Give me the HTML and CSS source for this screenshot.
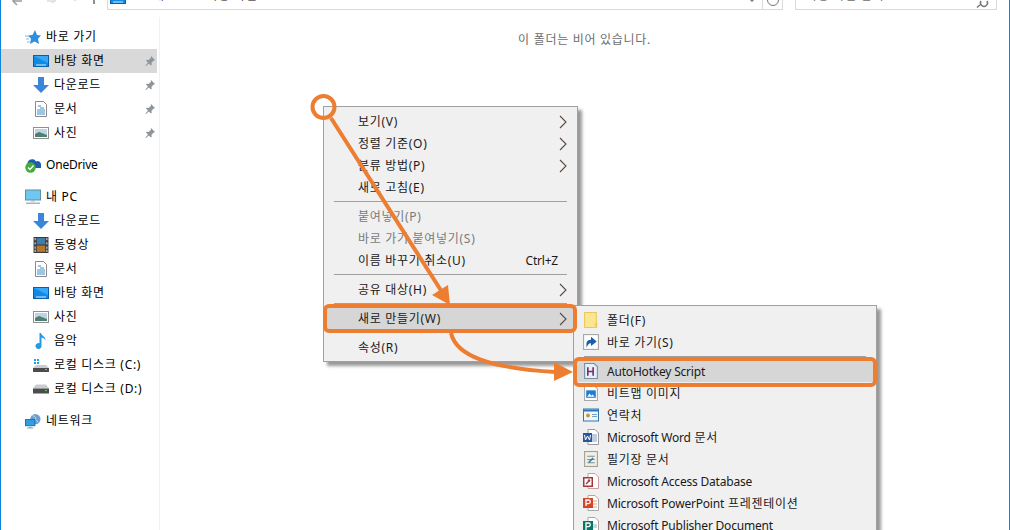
FILE: index.html
```html
<!DOCTYPE html>
<html lang="ko">
<head>
<meta charset="utf-8">
<title>바탕 화면</title>
<link rel="stylesheet" href="styles.css">
</head>
<body>
<svg class="defs" width="0" height="0">
  <defs>
    <symbol id="i-chev" viewBox="0 0 8 14"><path d="M1 1l6 6-6 6" fill="none" stroke="#5b4a42" stroke-width="1.100"/></symbol>
    <symbol id="i-desktop" viewBox="0 0 16 12"><rect x=".5" y=".5" width="15" height="11" fill="#0f8ae6" stroke="#0a5fa8"/><path d="M1 1h14v7z" fill="#35a9f5"/><path d="M3 10h10" stroke="#d5ecfb"/></symbol>
    <symbol id="i-down" viewBox="0 0 16 16"><path d="M5 0h6v8h5l-8 8-8-8h5z" fill="#3a86d8"/></symbol>
    <symbol id="i-doc" viewBox="0 0 12 16"><path d="M.5.5h8l3 3v12H.5z" fill="#fff" stroke="#8a8a8a"/><path d="M3 5h3M5 7h4M2 9h8M2 11h8M2 13h8" stroke="#3b8ec9"/></symbol>
    <symbol id="i-pic" viewBox="0 0 16 12"><rect x=".5" y=".5" width="15" height="11" fill="#fff" stroke="#8f8f8f"/><rect x="2" y="2" width="12" height="8" fill="#bcd3e6"/><path d="M2 7l4-2 8 3v2H2z" fill="#4f7f6d"/></symbol>
    <symbol id="i-star" viewBox="0 0 16 16"><path d="M10 1l2 5 4 .5-3 3.2 1 5.3-4.500-2.500L5 15l1-5.300-3-3.200 4.500-.500z" fill="#2f8fdf"/><path d="M0 7h4M1 10h3M2 13h3" stroke="#7fbdf0"/></symbol>
    <symbol id="i-pin" viewBox="0 0 10 11"><path d="M6 0l4 4-1.500.8-2 2 .2 2-.8.700-2-2L1 10l-.5-.5 2.500-3-2-2 .7-.8 2 .2 2-2z" fill="#8d959b"/></symbol>
    <symbol id="i-cloud" viewBox="0 0 16 16"><path d="M3 9a4.500 4.500 0 0 1 8-4.500A3.500 3.500 0 0 1 16 8v3H3z" fill="#1b5fb0"/><circle cx="5.500" cy="10.500" r="5.200" fill="#46ab3b"/><path d="M3 10.500l2 2 3.500-4" stroke="#fff" stroke-width="1.500" fill="none"/></symbol>
    <symbol id="i-pc" viewBox="0 0 16 15"><rect x=".5" y=".5" width="15" height="10" fill="#6fc6ee" stroke="#5e8ea6"/><path d="M6 11h4v1H6zM1 13h14v1.500H1z" fill="#a8b4bb"/></symbol>
    <symbol id="i-film" viewBox="0 0 14 15"><rect width="14" height="15" fill="#3a3a3a"/><rect x="3" y="1" width="8" height="6" fill="#3d7fa8"/><rect x="3" y="8" width="8" height="6" fill="#b5772b"/><path d="M1 1h1v2H1zM1 5h1v2H1zM1 9h1v2H1zM1 12h1v2H1zM12 1h1v2h-1zM12 5h1v2h-1zM12 9h1v2h-1zM12 12h1v2h-1z" fill="#ddd"/></symbol>
    <symbol id="i-music" viewBox="0 0 11 16"><path d="M4 0h1.500c.5 3 5 3.500 4.500 7.500C9.500 5.500 7.500 5 6 4.500V13a3 3 0 1 1-2-2.800z" fill="#1f9be8"/></symbol>
    <symbol id="i-driveC" viewBox="0 0 16 14"><path d="M1 1h2v2H1zM4 1h2v2H4zM1 4h2v2H1zM4 4h2v2H4z" fill="#1aa3e8"/><path d="M3 7h10l3 3H0z" fill="#c9cdd0"/><rect y="10" width="16" height="4" fill="#4c4c4c"/><rect x="12" y="11" width="2" height="1" fill="#58d25a"/></symbol>
    <symbol id="i-driveD" viewBox="0 0 16 9"><path d="M3 0h10l3 4H0z" fill="#c9cdd0"/><rect y="4" width="16" height="5" fill="#4c4c4c"/><rect x="12" y="5.500" width="2" height="1" fill="#58d25a"/></symbol>
    <symbol id="i-net" viewBox="0 0 17 16"><circle cx="11" cy="6" r="5.500" fill="#6b9fd0"/><path d="M8 2c3 1 4 3 3 5l3 2" stroke="#c7dff2" fill="none"/><rect x=".5" y="6.500" width="10" height="6.500" fill="#2f9fe3" stroke="#1f6aa8"/><path d="M4 14h3v1H4zM2 15h7v1H2z" fill="#9aa6ad"/></symbol>
    <symbol id="i-folder" viewBox="0 0 13 15"><rect x=".5" y=".5" width="11" height="14" fill="#fde68f" stroke="#e8c860"/><path d="M10 10h2.500v4.500H10z" fill="#f6cf5a"/></symbol>
    <symbol id="i-short" viewBox="0 0 14 14"><rect x=".5" y=".5" width="13" height="13" fill="#fff" stroke="#a8a8a8"/><path d="M3 12V8.500C3 6 4.500 5 7 5V2.500l5 4-5 4V8c-2 0-3 1.500-4 4z" fill="#1d5ea8"/></symbol>
    <symbol id="i-ahk" viewBox="0 0 13 15"><path d="M.5.500h9l3 3v11H.5z" fill="#e4effa" stroke="#7b8ba5"/><path d="M3.500 4v8M8.500 4v8M3.500 8h5" stroke="#7d2a5e" stroke-width="1.500" fill="none"/></symbol>
    <symbol id="i-bmp" viewBox="0 0 13 15"><path d="M.5.500h9l3 3v11H.5z" fill="#fff" stroke="#a8a8a8"/><rect x="2" y="5" width="9" height="7" fill="#1b7fd6"/><path d="M3 11l2-3 2 2 1-1 2 2z" fill="#fff"/></symbol>
    <symbol id="i-contact" viewBox="0 0 16 13"><rect x=".5" y=".5" width="15" height="12" fill="#eef5fb" stroke="#2c78b4"/><rect x="1" y="1" width="14" height="2" fill="#2c78b4"/><circle cx="5" cy="7" r="2" fill="#c9963c"/><path d="M9 6h5M9 8h5" stroke="#7a9fc0"/></symbol>
    <symbol id="i-word" viewBox="0 0 16 16"><path d="M5 .5h7l3.500 3.500v11.500H5z" fill="#fff" stroke="#9a9a9a"/><path d="M9 6h5M9 8h5M9 10h5M9 12h5" stroke="#7f9cc9"/><rect y="4" width="9" height="9" fill="#2b579a"/><path d="M1.500 6l1 5 2-4 2 4 1-5" stroke="#fff" fill="none"/></symbol>
    <symbol id="i-note" viewBox="0 0 13 15"><rect x=".5" y=".5" width="12" height="14" fill="#f2efe0" stroke="#a09f90"/><path d="M3 5h7M3 8h7M3 11h7" stroke="#6a8fb0"/><path d="M4 10l4-4 1 1-4 4z" fill="#2e7d8a"/></symbol>
    <symbol id="i-access" viewBox="0 0 16 16"><path d="M5 .5h7l3.500 3.500v11.500H5z" fill="#fff" stroke="#c9a0a0"/><rect y="4" width="10" height="10" fill="#a4373a"/><rect x="1.500" y="5.500" width="7" height="7" fill="#fff"/><path d="M3 11l3-3" stroke="#a4373a" stroke-width="1.500"/><circle cx="6" cy="7.500" r="1.200" fill="#a4373a"/></symbol>
    <symbol id="i-ppt" viewBox="0 0 16 16"><path d="M5 .5h7l3.500 3.500v11.500H5z" fill="#fff" stroke="#a8a8a8"/><path d="M10 6h4M10 9h4M10 12h4" stroke="#e3a08c"/><rect y="3" width="10" height="10" fill="#d24726"/><path d="M3 11V5h2.500a1.800 1.800 0 0 1 0 3.600H3" stroke="#fff" fill="none" stroke-width="1.300"/></symbol>
    <symbol id="i-pub" viewBox="0 0 16 16"><path d="M5 .5h7l3.500 3.500v11.500H5z" fill="#fff" stroke="#a8a8a8"/><rect x="10" y="7" width="4" height="4" fill="#cfd8d4"/><rect y="4" width="10" height="12" fill="#077568"/><path d="M3 13V6h2.500a1.800 1.800 0 0 1 0 3.600H3" stroke="#fff" fill="none" stroke-width="1.300"/></symbol>
  </defs>
</svg>

<div class="window">
  <header class="toolbar">
    <div class="nav">
      <svg class="nav-icon" width="100" height="10" viewBox="0 0 100 10"><path d="M17 -4L13 1 17 5M13 1h9" stroke="#9c9c9c" stroke-width="1.500" fill="none"/><path d="M57 -3L52 3M56 1h-9" stroke="#dedede" stroke-width="1.500" fill="none"/><path d="M72 -1l3 2 3-2" stroke="#e4e4e4" fill="none"/><path d="M94 -2v6" stroke="#8f8f8f" stroke-width="2"/></svg>
    </div>
    <div class="address">
      <svg class="addr-icon"><use href="#i-desktop"/></svg>
      <span class="addr-sep">›</span>
      <span class="addr-text">내 PC</span>
      <span class="addr-sep">›</span>
      <span class="addr-text">바탕 화면</span>
      <span class="addr-drop"></span>
      <span class="addr-refresh"></span>
    </div>
    <div class="search">
      <span class="search-text">바탕 화면 검색</span>
      <svg class="search-icon" width="12" height="6" viewBox="0 0 12 6"><path d="M1 5.500L5 2M5 -1a3.500 3.500 0 1 0 6 0" stroke="#777" stroke-width="1.500" fill="none"/></svg>
    </div>
  </header>

  <div class="main">
    <nav class="sidebar">
      <div class="group">
        <div class="row top"><svg class="ic"><use href="#i-star"/></svg><span>바로 가기</span></div>
        <div class="row sel"><svg class="ic"><use href="#i-desktop"/></svg><span>바탕 화면</span><svg class="pin"><use href="#i-pin"/></svg></div>
        <div class="row"><svg class="ic"><use href="#i-down"/></svg><span>다운로드</span><svg class="pin"><use href="#i-pin"/></svg></div>
        <div class="row"><svg class="ic"><use href="#i-doc"/></svg><span>문서</span><svg class="pin"><use href="#i-pin"/></svg></div>
        <div class="row"><svg class="ic"><use href="#i-pic"/></svg><span>사진</span><svg class="pin"><use href="#i-pin"/></svg></div>
      </div>
      <div class="group">
        <div class="row top"><svg class="ic"><use href="#i-cloud"/></svg><span class="lat">OneDrive</span></div>
      </div>
      <div class="group">
        <div class="row top"><svg class="ic"><use href="#i-pc"/></svg><span>내 PC</span></div>
        <div class="row"><svg class="ic"><use href="#i-down"/></svg><span>다운로드</span></div>
        <div class="row"><svg class="ic"><use href="#i-film"/></svg><span>동영상</span></div>
        <div class="row"><svg class="ic"><use href="#i-doc"/></svg><span>문서</span></div>
        <div class="row"><svg class="ic"><use href="#i-desktop"/></svg><span>바탕 화면</span></div>
        <div class="row"><svg class="ic"><use href="#i-pic"/></svg><span>사진</span></div>
        <div class="row"><svg class="ic"><use href="#i-music"/></svg><span>음악</span></div>
        <div class="row"><svg class="ic"><use href="#i-driveC"/></svg><span>로컬 디스크 (C:)</span></div>
        <div class="row"><svg class="ic"><use href="#i-driveD"/></svg><span>로컬 디스크 (D:)</span></div>
      </div>
      <div class="group">
        <div class="row top"><svg class="ic"><use href="#i-net"/></svg><span>네트워크</span></div>
      </div>
    </nav>
    <main class="content">
      <p class="empty">이 폴더는 비어 있습니다.</p>
    </main>
  </div>

  <div class="menu menu-main">
    <div class="item"><span>보기(V)</span><svg class="chev"><use href="#i-chev"/></svg></div>
    <div class="item"><span>정렬 기준(O)</span><svg class="chev"><use href="#i-chev"/></svg></div>
    <div class="item"><span>분류 방법(P)</span><svg class="chev"><use href="#i-chev"/></svg></div>
    <div class="item"><span>새로 고침(E)</span></div>
    <div class="sep"></div>
    <div class="item off"><span>붙여넣기(P)</span></div>
    <div class="item off"><span>바로 가기 붙여넣기(S)</span></div>
    <div class="item"><span>이름 바꾸기 취소(U)</span><em class="key lat">Ctrl+Z</em></div>
    <div class="sep"></div>
    <div class="item"><span>공유 대상(H)</span><svg class="chev"><use href="#i-chev"/></svg></div>
    <div class="sep"></div>
    <div class="item hot"><span>새로 만들기(W)</span><svg class="chev"><use href="#i-chev"/></svg></div>
    <div class="sep"></div>
    <div class="item"><span>속성(R)</span></div>
  </div>

  <div class="menu menu-sub">
    <div class="item"><svg class="mi"><use href="#i-folder"/></svg><span>폴더(F)</span></div>
    <div class="item"><svg class="mi"><use href="#i-short"/></svg><span>바로 가기(S)</span></div>
    <div class="sep"></div>
    <div class="item hot"><svg class="mi"><use href="#i-ahk"/></svg><span class="lat">AutoHotkey Script</span></div>
    <div class="item"><svg class="mi"><use href="#i-bmp"/></svg><span>비트맵 이미지</span></div>
    <div class="item"><svg class="mi"><use href="#i-contact"/></svg><span>연락처</span></div>
    <div class="item"><svg class="mi"><use href="#i-word"/></svg><span><span class="lat">Microsoft Word</span> 문서</span></div>
    <div class="item"><svg class="mi"><use href="#i-note"/></svg><span>필기장 문서</span></div>
    <div class="item"><svg class="mi"><use href="#i-access"/></svg><span class="lat">Microsoft Access Database</span></div>
    <div class="item"><svg class="mi"><use href="#i-ppt"/></svg><span><span class="lat">Microsoft PowerPoint</span> 프레젠테이션</span></div>
    <div class="item"><svg class="mi"><use href="#i-pub"/></svg><span class="lat">Microsoft Publisher Document</span></div>
  </div>

  <svg class="marks" width="1010" height="530" viewBox="0 0 1010 530">
    <circle class="m-line" cx="323.500" cy="107" r="11"/>
    <path class="m-line" d="M331 118L442 292"/>
    <path class="m-fill" d="M450 305L432 295 448 285z"/>
    <rect class="m-line" x="325" y="306" width="250" height="25" rx="4"/>
    <path class="m-line" d="M451 333C456 356 490 368 556 372"/>
    <path class="m-fill" d="M573 372L554 362V381z"/>
    <rect class="m-line" x="575" y="359" width="300" height="26" rx="4"/>
  </svg>
</div>
</body>
</html>
```
FILE: styles.css
```css
* { box-sizing: border-box; }
html, body { margin: 0; padding: 0; }
body {
  font: 12px/22px "Noto Sans", "Noto Sans CJK KR", sans-serif;
  color: #000;
  background: #fff;
  letter-spacing: .7px;
}
.lat { letter-spacing: -.2px; }
.defs { position: absolute; }
.window {
  position: relative;
  width: 1010px;
  height: 530px;
  overflow: hidden;
  display: flex;
  flex-direction: column;
  border-left: 1px solid #0f85dc;
  border-right: 1px solid #0f85dc;
}

/* toolbar, only its lower edge is in frame */
.toolbar {
  flex: none;
  height: 17px;
  display: flex;
  align-items: flex-start;
  overflow: hidden;
}
.nav { width: 106px; height: 10px; flex: none; }
.nav-icon { display: block; margin-left: -1px; overflow: visible; }
.address, .search {
  height: 10px;
  display: flex;
  align-items: flex-end;
  overflow: hidden;
  border: 1px solid #d9d9d9;
  border-top: 0;
  color: #555;
}
.address { width: 676px; padding-left: 2px; }
.addr-icon { width: 16px; height: 12px; flex: none; margin-bottom: 5px; }
.addr-sep { width: 27px; padding-left: 6px; flex: none; height: 22px; line-height: 20px; color: #777; }
.addr-text { flex: none; height: 22px; line-height: 18px; }
.addr-text + .addr-sep { width: 22px; padding-left: 2px; }
.addr-drop {
  margin: 0 0 7px auto;
  width: 0;
  height: 0;
  border: 4px solid transparent;
  border-top: 4px solid #777;
  border-bottom: 0;
}
.addr-refresh {
  margin-left: 6px;
  width: 20px;
  height: 9px;
  border-left: 1px solid #d9d9d9;
  display: flex;
  justify-content: center;
  overflow: hidden;
}
.addr-refresh::before {
  content: "";
  display: block;
  width: 10px;
  height: 10px;
  margin-top: -6px;
  border: 1px solid #777;
  border-radius: 50%;
}
.search {
  width: 202px;
  margin-left: 12px;
  padding: 0 8px 0 10px;
  justify-content: space-between;
}
.search-text { height: 22px; line-height: 18px; color: #6d6d6d; }
.search-icon { flex: none; margin-bottom: 1px; overflow: visible; }

/* navigation pane */
.main { flex: 1; display: flex; min-height: 0; }
.sidebar {
  width: 159px;
  flex: none;
  padding: 8px 0 0 0;
  border-right: 1px solid #f1f1f1;
}
.group + .group { margin-top: 8px; }
.row {
  position: relative;
  height: 24px;
  width: 156px;
  display: flex;
  align-items: center;
  padding-left: 32px;
}
.row.top { padding-left: 24px; }
.row.sel { background: #d9d9d9; }
.ic { width: 16px; height: 16px; margin-right: 5px; flex: none; }
.pin {
  position: absolute;
  right: 2px;
  top: 7px;
  width: 10px;
  height: 11px;
}

/* content */
.content { flex: 1; min-width: 0; }
.empty {
  margin: 11px 0 0;
  padding-top: 1px;
  text-align: center;
  color: #6d6d6d;
}

/* menus */
.menu {
  position: absolute;
  background: #f0f0f0;
  border: 1px solid #a0a0a0;
  box-shadow: 4px 4px 3px rgba(0, 0, 0, .4);
  padding: 3px 2px;
}
.menu-main { left: 322px; top: 106px; width: 255px; }
.menu-sub { left: 572px; top: 305px; width: 304px; height: 240px; }
.item {
  height: 22px;
  display: flex;
  align-items: center;
  padding: 2px 8px 0 32px;
  position: relative;
  color: #1a1a1a;
}
.item.off { color: #7a7a7a; }
.item.hot { background: #d6d6d6; }
.menu-sub .item { padding-left: 31px; }
.menu-sub .mi {
  position: absolute;
  left: 7px;
  top: 3px;
  width: 16px;
  height: 16px;
}
.chev { margin-left: auto; width: 8px; height: 14px; flex: none; }
.key { margin-left: auto; margin-right: 9px; font-style: normal; }
.sep {
  height: 7px;
  padding-top: 3px;
  margin: 0 8px;
}
.sep::before { content: ""; display: block; height: 1px; background: #a0a0a0; }

/* annotations drawn on top of the screenshot */
.marks { position: absolute; left: -1px; top: 0; pointer-events: none; }
.m-line { fill: none; stroke: #ed7d31; stroke-width: 4; }
.m-fill { fill: #ed7d31; }
```
